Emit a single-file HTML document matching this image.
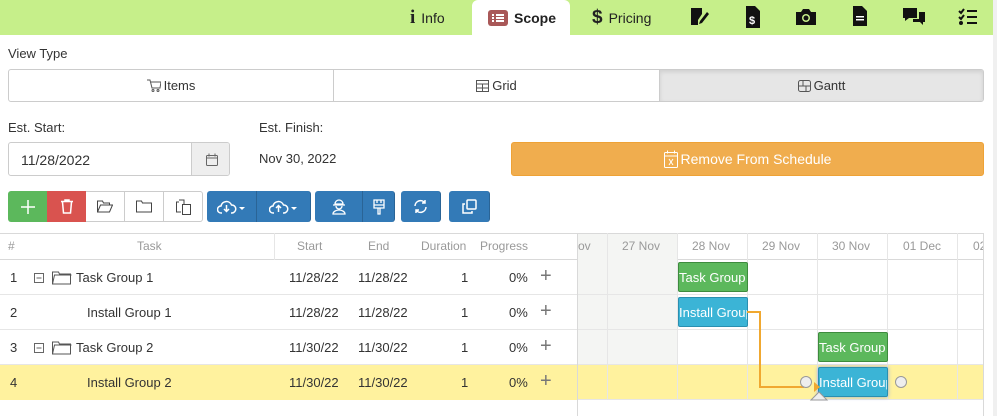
<!DOCTYPE html>
<html><head><meta charset="utf-8"><style>
*{box-sizing:border-box;margin:0;padding:0}
body{width:997px;height:416px;overflow:hidden;background:#fff;font-family:"Liberation Sans",Arial,sans-serif;font-size:13px;color:#333;position:relative}
.a{position:absolute}
.tab{position:absolute;top:0;height:35px;line-height:34px;font-size:14px;color:#222;display:flex;align-items:center;gap:6px}
.btn{position:absolute;top:191px;height:31px;display:flex;align-items:center;justify-content:center}
.blue{background:#337ab7;border-right:1px solid #2a6496}
.wb{background:#fff;border:1px solid #ccc;border-left:none}
.row{position:absolute;left:0;width:577px;height:35px;border-bottom:1px solid #e6e6e6;font-size:13px}
.row span{position:absolute;top:10px}
.gc{position:absolute;top:233px;height:167px;border-left:1px solid #e6e6e6}
.bar{position:absolute;width:70px;height:30px;border-radius:2px;color:#fff;font-size:13px;line-height:29px;padding-left:0;white-space:nowrap;overflow:hidden}
.g{background:#5cb85c;border:1px solid #3d8b3d}
.b{background:#3bb4d6;border:1px solid #2a8fb0}
.pl{color:#777;font-size:20px;top:5px!important}
</style></head><body>
<div class="a" style="left:0;top:0;width:993px;height:35px;background:#c6ef8a"></div>
<div class="a" style="left:993px;top:0;width:4px;height:416px;background:#f0f0f0"></div>
<div class="a" style="left:472px;top:0;width:98px;height:35px;background:#fff;border-radius:6px 6px 0 0"></div>
<div class="tab" style="left:410px"><b style="font-family:'Liberation Serif';font-size:19px">i</b><span>Info</span></div>
<div class="tab" style="left:488px;font-weight:bold"><svg width="20" height="16"><rect width="20" height="16" rx="3" fill="#a95858"/><rect x="4" y="4" width="2" height="2" fill="#fff"/><rect x="4" y="7" width="2" height="2" fill="#fff"/><rect x="4" y="10" width="2" height="2" fill="#fff"/><rect x="8" y="4" width="8" height="2" fill="#fff"/><rect x="8" y="7" width="8" height="2" fill="#fff"/><rect x="8" y="10" width="8" height="2" fill="#fff"/></svg><span>Scope</span></div>
<div class="tab" style="left:592px"><b style="font-size:19px">$</b><span>Pricing</span></div>
<svg class="a" style="left:689px;top:7px" width="20" height="20"><path d="M2 1h11v6l-4 6v5H2z" fill="#111"/><path d="M11 14l7-9 2 2-7 9-3 1z" fill="#111"/></svg>
<svg class="a" style="left:746px;top:6px" width="14" height="22"><path d="M0 0h9l5 5v17H0z" fill="#111"/><text x="3" y="18" font-size="11" fill="#fff" font-family="Liberation Sans" font-weight="bold">$</text></svg>
<svg class="a" style="left:796px;top:8px" width="20" height="17"><path d="M0 4h5l2-3h6l2 3h5v13H0z" fill="#111"/><circle cx="10" cy="10" r="4" fill="#c6ef8a"/><circle cx="10" cy="10" r="2.5" fill="#111"/></svg>
<svg class="a" style="left:853px;top:6px" width="14" height="20"><path d="M0 0h9l5 5v15H0z" fill="#111"/><rect x="3" y="10" width="8" height="1.5" fill="#fff"/><rect x="3" y="13" width="8" height="1.5" fill="#fff"/></svg>
<svg class="a" style="left:903px;top:7px" width="22" height="20"><path d="M0 1h14v10H6l-4 3v-3H0z" fill="#111"/><path d="M16 5h6v10h-2v3l-3-3h-7v-3h6z" fill="#111"/></svg>
<svg class="a" style="left:958px;top:8px" width="20" height="18" stroke="#111" stroke-width="2" fill="none"><path d="M1 3l2 2 3-4M1 9l2 2 3-4"/><path d="M9 3h10M9 9h10M9 15h10"/><circle cx="3" cy="15" r="1" fill="#111"/></svg>

<div class="a" style="left:8px;top:46px">View Type</div>
<div class="a" style="left:8px;top:69px;width:976px;height:33px;border:1px solid #ccc;border-radius:3px;display:flex;overflow:hidden">
<div style="width:325px;display:flex;align-items:center;justify-content:center;gap:3px;border-right:1px solid #ccc"><svg width="14" height="13" fill="none" stroke="#555"><path d="M0 1h3l2 8h8l1-6H4"/><circle cx="6" cy="11.5" r="1"/><circle cx="11" cy="11.5" r="1"/></svg>Items</div>
<div style="width:326px;display:flex;align-items:center;justify-content:center;gap:3px;border-right:1px solid #ccc"><svg width="13" height="12" fill="none" stroke="#555"><rect x=".5" y=".5" width="12" height="11"/><path d="M.5 4h12M.5 8h12M6.5 4v8"/></svg>Grid</div>
<div style="flex:1;background:#e6e6e6;display:flex;align-items:center;justify-content:center;gap:3px;box-shadow:inset 0 2px 4px rgba(0,0,0,.1)"><svg width="13" height="12" fill="none" stroke="#555"><rect x=".5" y=".5" width="12" height="11" rx="2"/><path d="M.5 6h12M5 .5v5M8 6v5"/></svg>Gantt</div>
</div>
<div class="a" style="left:8px;top:120px">Est. Start:</div>
<div class="a" style="left:259px;top:120px">Est. Finish:</div>
<div class="a" style="left:8px;top:142px;width:222px;height:34px;border:1px solid #ccc;border-radius:3px;overflow:hidden">
<div class="a" style="left:12px;top:9px;font-size:14px">11/28/2022</div>
<div class="a" style="left:182px;top:0;width:40px;height:34px;background:#eee;border-left:1px solid #ccc"><svg class="a" style="left:14px;top:10px" width="12" height="13" fill="none" stroke="#666"><rect x=".5" y="2.5" width="11" height="10" rx="1"/><path d="M.5 5h11M3 .5v3M9 .5v3"/></svg></div>
</div>
<div class="a" style="left:259px;top:151px">Nov 30, 2022</div>
<div class="a" style="left:511px;top:142px;width:473px;height:34px;background:#f0ad4e;border:1px solid #eea236;border-radius:3px;color:#fff;font-size:14px;display:flex;align-items:center;justify-content:center;gap:3px"><svg width="14" height="18" fill="none" stroke="#fff"><rect x=".5" y="2.5" width="13" height="15" rx="1"/><path d="M.5 6h13M3.5 .5v3M10.5 .5v3M5 9l4 6M9 9l-4 6"/></svg>Remove From Schedule</div>

<div class="btn" style="left:8px;width:39px;background:#5cb85c;border-radius:3px 0 0 3px"><svg width="14" height="14" stroke="#fff" stroke-width="1.5"><path d="M7 0v14M0 7h14"/></svg></div>
<div class="btn" style="left:47px;width:39px;background:#d9534f"><svg width="12" height="15" fill="none" stroke="#fff" stroke-width="1.5"><path d="M0 2.5h12M4 2.5V1h4v1.5M1.5 3l1 11h7l1-11"/></svg></div>
<div class="btn wb" style="left:86px;width:39px"><svg width="16" height="13" fill="none" stroke="#444"><path d="M.5 12V1h5l1 2h6v2M.5 12l3-7h12l-3 7z"/></svg></div>
<div class="btn wb" style="left:125px;width:39px"><svg width="16" height="13" fill="none" stroke="#444"><path d="M.5 12V1h5l1 2h9v9z"/></svg></div>
<div class="btn wb" style="left:164px;width:39px;border-radius:0 3px 3px 0"><svg width="15" height="16" fill="none" stroke="#444"><path d="M3 3H.5v10H5M3 1h5v4"/><rect x="6.5" y="5.5" width="8" height="10"/></svg></div>
<div class="btn blue" style="left:207px;width:50px;border-radius:3px 0 0 3px"><svg width="30" height="16" fill="none" stroke="#fff" stroke-width="1.5"><path d="M5 14H4a3.5 3.5 0 010-7 5.5 5.5 0 0110.5-1A4 4 0 0115 14h-1"/><path d="M9.5 6v6M7 10l2.5 2.5L12 10"/><path d="M22 8h6l-3 3z" fill="#fff" stroke="none"/></svg></div>
<div class="btn blue" style="left:257px;width:54px;border-radius:0 3px 3px 0"><svg width="30" height="16" fill="none" stroke="#fff" stroke-width="1.5"><path d="M5 14H4a3.5 3.5 0 010-7 5.5 5.5 0 0110.5-1A4 4 0 0115 14h-1"/><path d="M9.5 13V7M7 9l2.5-2.5L12 9"/><path d="M22 8h6l-3 3z" fill="#fff" stroke="none"/></svg></div>
<div class="btn blue" style="left:315px;width:48px;border-radius:3px 0 0 3px"><svg width="14" height="17" fill="none" stroke="#fff" stroke-width="1.3"><path d="M3 6a4 4 0 018 0zM1 7h12M4 8a3 3 0 006 0M1 16a6 4 0 0112 0z"/></svg></div>
<div class="btn blue" style="left:363px;width:32px;border-radius:0 3px 3px 0"><svg width="12" height="16" fill="none" stroke="#fff" stroke-width="1.3"><path d="M1 1h10v8H1zM1 6h10M4 1v3M8 1v3M5 9v6h2V9"/></svg></div>
<div class="btn blue" style="left:401px;width:40px;border-radius:3px"><svg width="15" height="15" fill="none" stroke="#fff" stroke-width="1.5"><path d="M2 7a5.5 5.5 0 0110-3M13 8a5.5 5.5 0 01-10 3M12 1v3H9M3 14v-3h3"/></svg></div>
<div class="btn blue" style="left:449px;width:41px;border-radius:3px"><svg width="15" height="15" fill="none" stroke="#fff" stroke-width="1.5"><rect x="5" y="1" width="9" height="9" rx="1"/><path d="M3 5H1v9h9v-2"/></svg></div>

<div class="a" style="left:0;top:233px;width:984px;height:183px;border-top:1px solid #d9d9d9;border-right:1px solid #d9d9d9"></div>
<div class="a" style="left:0;top:259px;width:984px;border-top:1px solid #d9d9d9"></div>
<div class="a" style="left:577px;top:233px;height:183px;border-left:1px solid #d9d9d9"></div>
<div class="a" style="left:274px;top:233px;height:27px;border-left:1px solid #e6e6e6"></div>
<div class="a" style="top:239px;left:0;width:577px;color:#999;font-size:12px">
<span class="a" style="left:8px">#</span><span class="a" style="left:137px">Task</span><span class="a" style="left:297px">Start</span><span class="a" style="left:368px">End</span><span class="a" style="left:421px">Duration</span><span class="a" style="left:480px">Progress</span></div>

<div class="a" style="left:578px;top:234px;width:99px;height:166px;background:#f4f5f3"></div>
<div class="a" style="left:578px;top:365px;width:405px;height:35px;background:#fff29e"></div>
<div class="row" style="top:365px;background:#fff29e;border-bottom:none"></div>
<div class="a" style="left:578px;top:294px;width:405px;border-top:1px solid #e6e6e6"></div>
<div class="a" style="left:578px;top:329px;width:405px;border-top:1px solid #e6e6e6"></div>
<div class="a" style="left:578px;top:364px;width:405px;border-top:1px solid #e6e6e6"></div>
<div class="a" style="left:578px;top:399px;width:405px;border-top:1px solid #e6e6e6"></div>
<div class="gc" style="left:607px"></div><div class="gc" style="left:677px"></div><div class="gc" style="left:747px"></div><div class="gc" style="left:817px"></div><div class="gc" style="left:887px"></div><div class="gc" style="left:957px"></div>
<div class="a" style="top:239px;left:578px;width:405px;height:16px;overflow:hidden;color:#999;font-size:12px">
<span class="a" style="left:0">ov</span><span class="a" style="left:44px">27 Nov</span><span class="a" style="left:114px">28 Nov</span><span class="a" style="left:184px">29 Nov</span><span class="a" style="left:254px">30 Nov</span><span class="a" style="left:325px">01 Dec</span><span class="a" style="left:395px">02</span></div>

<div class="row" style="top:260px"><span style="left:10px">1</span><svg class="a" style="left:34px;top:13px" width="10" height="10" fill="none" stroke="#666"><rect x=".5" y=".5" width="9" height="9"/><path d="M2.5 5h5"/></svg><svg class="a" style="left:52px;top:11px" width="20" height="14" fill="none" stroke="#555"><path d="M.5 13V1h6l1 2h11v10z M.5 13l2-9h17"/></svg><span style="left:76px">Task Group 1</span><span style="left:289px">11/28/22</span><span style="left:358px">11/28/22</span><span style="left:461px">1</span><span style="left:509px">0%</span><span class="pl" style="left:540px">+</span></div>
<div class="row" style="top:295px"><span style="left:10px">2</span><span style="left:87px">Install Group 1</span><span style="left:289px">11/28/22</span><span style="left:358px">11/28/22</span><span style="left:461px">1</span><span style="left:509px">0%</span><span class="pl" style="left:540px">+</span></div>
<div class="row" style="top:330px"><span style="left:10px">3</span><svg class="a" style="left:34px;top:13px" width="10" height="10" fill="none" stroke="#666"><rect x=".5" y=".5" width="9" height="9"/><path d="M2.5 5h5"/></svg><svg class="a" style="left:52px;top:11px" width="20" height="14" fill="none" stroke="#555"><path d="M.5 13V1h6l1 2h11v10z M.5 13l2-9h17"/></svg><span style="left:76px">Task Group 2</span><span style="left:289px">11/30/22</span><span style="left:358px">11/30/22</span><span style="left:461px">1</span><span style="left:509px">0%</span><span class="pl" style="left:540px">+</span></div>
<div class="row" style="top:365px;background:transparent;border-bottom:none"><span style="left:10px">4</span><span style="left:87px">Install Group 2</span><span style="left:289px">11/30/22</span><span style="left:358px">11/30/22</span><span style="left:461px">1</span><span style="left:509px">0%</span><span class="pl" style="left:540px">+</span></div>

<div class="bar g" style="left:678px;top:262px">Task Group 1</div>
<div class="bar b" style="left:678px;top:297px">Install Group 1</div>
<div class="bar g" style="left:818px;top:332px">Task Group 2</div>
<div class="bar b" style="left:818px;top:367px;box-shadow:0 0 4px #9ad">Install Group 2</div>
<svg class="a" style="left:740px;top:305px" width="180" height="100" fill="none">
<path d="M7 7h13v75h44" stroke="#f0a830" stroke-width="2"/>
<path d="M74 77l6 5-6 5z" fill="#f0a830"/>
<circle cx="66" cy="77" r="5.5" fill="#eee" stroke="#999"/>
<circle cx="161" cy="77" r="5.5" fill="#eee" stroke="#999"/>
<path d="M71 95l8-8 8 8z" fill="#eee" stroke="#999"/>
</svg>
</body></html>
